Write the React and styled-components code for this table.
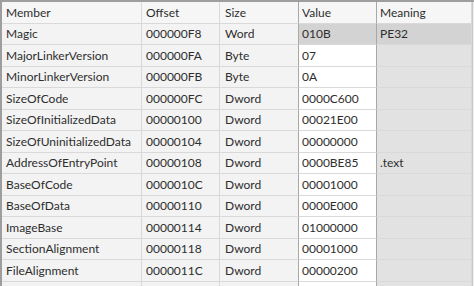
import React from "react";
import styled, { createGlobalStyle } from "styled-components";

const Global = createGlobalStyle`
  html, body { margin: 0; padding: 0; background: #f0f0f0; }
  body { font-family: Lato, "Noto Sans", sans-serif; }
`;

const Frame = styled.div`
  width: 474px;
  height: 286px;
  overflow: hidden;
  box-sizing: border-box;
  border-left: 2px solid #9e9e9e;
  border-top: 2px solid #9e9e9e;
  background: #f0f0f0;
`;

const Table = styled.div`
  display: grid;
  grid-template-columns: 140px 78px 79px 78px 95px;
  grid-auto-rows: 21.5px;
  width: 470px;
  border-right: 1px solid #c8c8c8;
`;

const bgFor = (kind) => {
  switch (kind) {
    case "head": return "#f6f6f6";
    case "value": return "#ffffff";
    case "meaning": return "#e2e2e2";
    case "selected": return "#d3d3d3";
    default: return "#f3f3f3";
  }
};

const Cell = styled.div`
  box-sizing: border-box;
  display: flex;
  align-items: center;
  padding-left: ${(p) => p.$pad ?? 4}px;
  background: ${(p) => bgFor(p.$kind)};
  border-right: 1px solid ${(p) => (p.$strong ? "#a8a8a8" : "#d9d9d9")};
  border-bottom: 1px solid #d9d9d9;
  font-size: 12px;
  color: #2e2e2e;
  white-space: nowrap;
  overflow: hidden;
`;

const rows = [
  ["Magic", "000000F8", "Word", "010B", "PE32"],
  ["MajorLinkerVersion", "000000FA", "Byte", "07", ""],
  ["MinorLinkerVersion", "000000FB", "Byte", "0A", ""],
  ["SizeOfCode", "000000FC", "Dword", "0000C600", ""],
  ["SizeOfInitializedData", "00000100", "Dword", "00021E00", ""],
  ["SizeOfUninitializedData", "00000104", "Dword", "00000000", ""],
  ["AddressOfEntryPoint", "00000108", "Dword", "0000BE85", ".text"],
  ["BaseOfCode", "0000010C", "Dword", "00001000", ""],
  ["BaseOfData", "00000110", "Dword", "0000E000", ""],
  ["ImageBase", "00000114", "Dword", "01000000", ""],
  ["SectionAlignment", "00000118", "Dword", "00001000", ""],
  ["FileAlignment", "0000011C", "Dword", "00000200", ""],
  ["", "", "", "", ""],
];

const pads = [4, 4, 5, 3, 3];

export default function App() {
  const head = ["Member", "Offset", "Size", "Value", "Meaning"];
  return (
    <>
      <Global />
      <Frame>
        <Table>
          {head.map((h, i) => (
            <Cell key={h} $kind="head" $pad={pads[i]} $strong={i === 2 || i === 3}>
              {h}
            </Cell>
          ))}
          {rows.map((r, ri) =>
            r.map((c, ci) => {
              let kind = "plain";
              if (ci === 3) kind = ri === 0 ? "selected" : "value";
              if (ci === 4) kind = ri === 0 ? "selected" : "meaning";
              return (
                <Cell
                  key={ri + "-" + ci}
                  $kind={kind}
                  $pad={pads[ci]}
                  $strong={ci === 2 || ci === 3}
                >
                  {c}
                </Cell>
              );
            })
          )}
        </Table>
      </Frame>
    </>
  );
}
